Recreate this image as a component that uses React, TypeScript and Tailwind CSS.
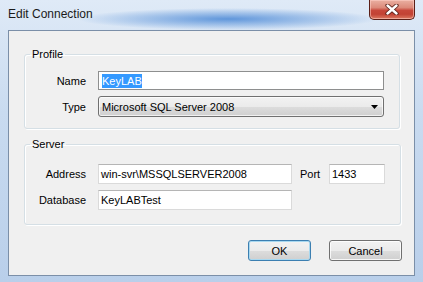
import React from "react";

function CloseButton() {
  return (
    <div className="ml-auto w-[46px] h-[20px] rounded-b-[5px] border border-t-0 border-[#5a1f17] bg-[linear-gradient(#eab0a2_0%,#dc8a7a_40%,#c7473a_55%,#c24234_75%,#dc7a62_100%)] shadow-[inset_0_0_0_1px_rgba(255,210,200,0.55)] flex items-center justify-center">
      <svg width="14" height="11" viewBox="0 0 14 11">
        <path d="M2.5 1.5 L11.5 9.5 M11.5 1.5 L2.5 9.5" stroke="#5a2018" strokeWidth="4.2" strokeLinecap="round" />
        <path d="M2.5 1.5 L11.5 9.5 M11.5 1.5 L2.5 9.5" stroke="#ffffff" strokeWidth="2.4" strokeLinecap="round" />
      </svg>
    </div>
  );
}

function Label({ children }: { children: React.ReactNode }) {
  return <div className="w-[61px] text-right text-[11px] leading-[14px] text-black shrink-0">{children}</div>;
}

export default function App() {
  return (
    <div className="w-[423px] h-[282px] flex flex-col overflow-hidden bg-[linear-gradient(#dfeaf7_0%,#c9dbf0_40%,#b9cfea_100%)] font-['Liberation_Sans',Arial,sans-serif]">
      <div className="h-[30px] shrink-0 flex items-start pl-[8px] pr-[8px] bg-[radial-gradient(ellipse_150px_11px_at_228px_19px,rgba(74,136,214,0.85),rgba(74,136,214,0.35)_60%,rgba(74,136,214,0))]">
        <span className="mt-[7px] text-[12px] leading-[15px] text-[#1a1a1a]">Edit Connection</span>
        <CloseButton />
      </div>
      <div className="mx-[8px] mb-[6px] flex-1 border border-[#7b8fa8] bg-[#f0f0f0] flex flex-col">
        <fieldset className="mt-[16px] ml-[15px] mr-[14px] border border-[#d5dfe5] rounded-[3px] shadow-[inset_1px_1px_0_#ffffff,1px_1px_0_#ffffff]">
          <legend className="ml-[5px] px-[2px] text-[11px] leading-[14px] text-black">Profile</legend>
          <div className="pt-[10px] pb-[11px] pr-[15px] flex flex-col gap-[6px]">
            <div className="flex items-center gap-[12px]">
              <Label>Name</Label>
              <div className="flex-1 h-[19px] border border-[#8e8f8f] bg-white flex items-center pl-[3px]">
                <span className="bg-[#3399ff] text-white text-[11px] leading-[14px]">KeyLAB</span>
              </div>
            </div>
            <div className="flex items-center gap-[12px]">
              <Label>Type</Label>
              <div className="flex-1 h-[21px] border border-[#707070] rounded-[3px] bg-[linear-gradient(#f2f2f2_0%,#ebebeb_50%,#dddddd_50%,#cfcfcf_100%)] shadow-[inset_0_0_0_1px_rgba(255,255,255,0.7)] flex items-center pl-[3px] pr-[5px]">
                <span className="text-[11px] leading-[14px] text-black">Microsoft SQL Server 2008</span>
                <svg className="ml-auto" width="7" height="4" viewBox="0 0 7 4">
                  <path d="M0 0 H7 L3.5 4 Z" fill="#000000" />
                </svg>
              </div>
            </div>
          </div>
        </fieldset>

        <fieldset className="mt-[8px] ml-[15px] mr-[14px] border border-[#d5dfe5] rounded-[3px] shadow-[inset_1px_1px_0_#ffffff,1px_1px_0_#ffffff]">
          <legend className="ml-[5px] px-[2px] text-[11px] leading-[14px] text-black">Server</legend>
          <div className="pt-[13px] pb-[14px] pr-[15px] flex flex-col gap-[6px]">
            <div className="flex items-center">
              <Label>Address</Label>
              <div className="ml-[12px] w-[194px] h-[20px] border border-[#dadada] border-t-[#b5b5b5] bg-white flex items-center pl-[2px]">
                <span className="text-[11px] leading-[14px] text-black">win-svr\MSSQLSERVER2008</span>
              </div>
              <span className="ml-[8px] w-[29px] text-[11px] leading-[14px] text-black">Port</span>
              <div className="w-[56px] h-[20px] border border-[#dadada] border-t-[#b5b5b5] bg-white flex items-center pl-[2px]">
                <span className="text-[11px] leading-[14px] text-black">1433</span>
              </div>
            </div>
            <div className="flex items-center gap-[12px]">
              <Label>Database</Label>
              <div className="w-[194px] h-[20px] border border-[#dadada] border-t-[#b5b5b5] bg-white flex items-center pl-[2px]">
                <span className="text-[11px] leading-[14px] text-black">KeyLABTest</span>
              </div>
            </div>
          </div>
        </fieldset>

        <div className="mt-[15px] mr-[12px] flex justify-end gap-[18px]">
          <div className="w-[63px] h-[21px] rounded-[3px] border border-[#3c7fb1] bg-[linear-gradient(#f2f2f2_0%,#ebebeb_50%,#dddddd_50%,#cfcfcf_100%)] shadow-[inset_0_0_0_1px_#a8d8f0] flex items-center justify-center">
            <span className="text-[11px] leading-[14px] text-black">OK</span>
          </div>
          <div className="w-[73px] h-[21px] rounded-[3px] border border-[#707070] bg-[linear-gradient(#f2f2f2_0%,#ebebeb_50%,#dddddd_50%,#cfcfcf_100%)] shadow-[inset_0_0_0_1px_rgba(255,255,255,0.8)] flex items-center justify-center">
            <span className="text-[11px] leading-[14px] text-black">Cancel</span>
          </div>
        </div>
      </div>
    </div>
  );
}
